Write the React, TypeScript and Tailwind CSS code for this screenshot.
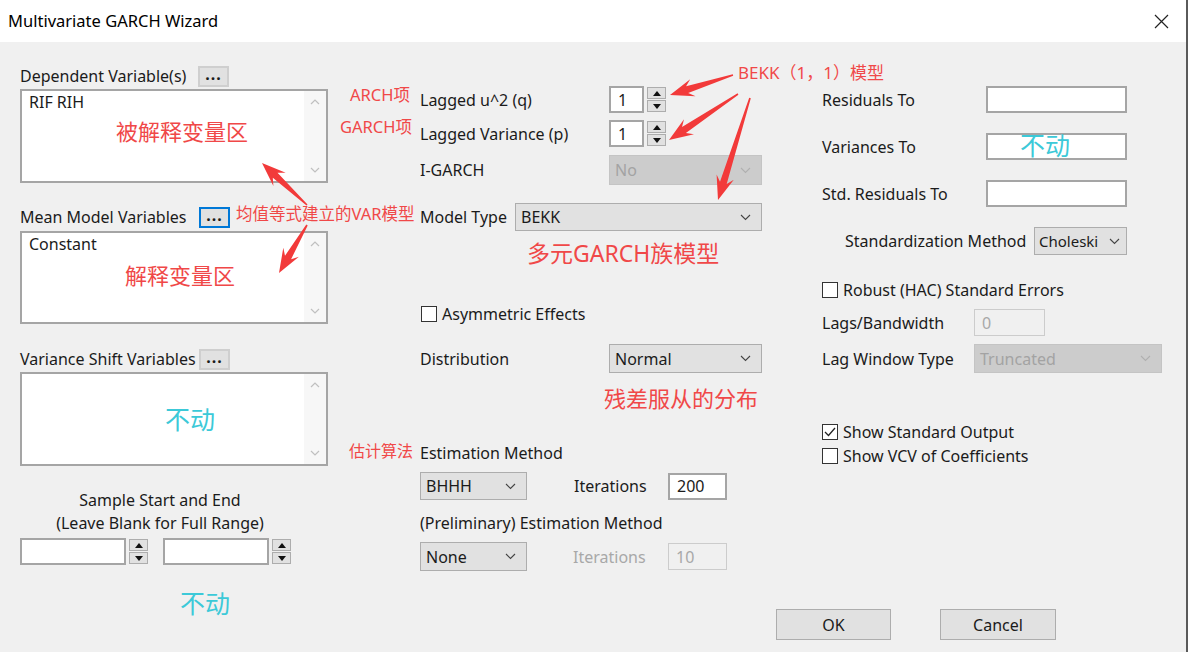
import React from "react";

const FONT = { fontFamily: '"Noto Sans", "Noto Sans CJK SC", sans-serif' };

function Chevron({ disabled }: { disabled?: boolean }) {
    return (
        <svg width="11" height="7" viewBox="0 0 11 7" className="shrink-0">
            <polyline
                points="1,1 5.5,5.5 10,1"
                fill="none"
                stroke={disabled ? "#b0b0b0" : "#444"}
                strokeWidth="1.1"
            />
        </svg>
    );
}

function Select({
    value,
    w,
    h,
    disabled,
    tight,
}: {
    value: string;
    w: string;
    h: string;
    disabled?: boolean;
    tight?: boolean;
}) {
    return (
        <div
            className={`${w} ${h} shrink-0 flex items-center justify-between border ${
                tight ? "pl-[4px] pr-[6px] text-[15px]" : "pl-[5px] pr-[10px]"
            } ${disabled ? "bg-[#cccccc] border-[#c4c4c4] text-[#a3a3a3]" : "bg-[#e1e1e1] border-[#adadad] text-[#1b1b1b]"}`}
        >
            <span>{value}</span>
            <Chevron disabled={disabled} />
        </div>
    );
}

function TextBox({ value, w, h, disabled }: { value?: string; w: string; h: string; disabled?: boolean }) {
    return (
        <div
            className={`${w} ${h} shrink-0 flex items-center pl-[7px] ${
                disabled
                    ? "bg-[#f0f0f0] border border-[#cccccc] text-[#a8a8a8]"
                    : "bg-white border-2 border-[#a5a5a5] text-[#1b1b1b]"
            }`}
        >
            {value}
        </div>
    );
}

function Tri({ up }: { up?: boolean }) {
    return (
        <svg width="8" height="5" viewBox="0 0 8 5">
            <polygon points={up ? "0,5 8,5 4,0" : "0,0 8,0 4,5"} fill="#111" />
        </svg>
    );
}

function SpinButtons() {
    return (
        <div className="flex flex-col gap-[1px] ml-[3px] shrink-0">
            <div className="w-[19px] h-[12px] bg-[#e1e1e1] border border-[#adadad] flex items-center justify-center">
                <Tri up />
            </div>
            <div className="w-[19px] h-[12px] bg-[#e1e1e1] border border-[#adadad] flex items-center justify-center">
                <Tri />
            </div>
        </div>
    );
}

function Spin({ value, w }: { value?: string; w: string }) {
    return (
        <div className="flex items-center shrink-0">
            <TextBox value={value} w={w} h="h-[27px]" />
            <SpinButtons />
        </div>
    );
}

function DotsButton({ focused }: { focused?: boolean }) {
    return (
        <div
            className={`w-[31px] h-[21px] flex items-end justify-center bg-[#e1e1e1] border-2 text-[16px] font-bold leading-none pb-[3px] tracking-[1px] ${
                focused ? "border-[#0078d7]" : "border-[#cfcfcf]"
            }`}
        >
            ...
        </div>
    );
}

function ListBox({ children, h }: { children?: React.ReactNode; h: string }) {
    return (
        <div className={`w-[308px] ${h} bg-white border-2 border-[#a5a5a5] flex`}>
            <div className="flex-1 pl-[7px] pt-[1px]">{children}</div>
            <div className="w-[22px] bg-[#f7f7f7] flex flex-col items-center justify-between py-[8px]">
                <svg width="10" height="6" viewBox="0 0 10 6">
                    <polyline points="1,5 5,1 9,5" fill="none" stroke="#c0c0c0" strokeWidth="1.2" />
                </svg>
                <svg width="10" height="6" viewBox="0 0 10 6">
                    <polyline points="1,1 5,5 9,1" fill="none" stroke="#c0c0c0" strokeWidth="1.2" />
                </svg>
            </div>
        </div>
    );
}

function Check({ label, checked, className }: { label: string; checked?: boolean; className?: string }) {
    return (
        <div className={`flex items-center h-[16px] ${className ?? ""}`}>
            <div className="w-[16px] h-[16px] border border-[#333] bg-white flex items-center justify-center shrink-0">
                {checked && (
                    <svg width="12" height="10" viewBox="0 0 12 10">
                        <polyline points="1,5 4.5,8.5 11,1" fill="none" stroke="#222" strokeWidth="1.3" />
                    </svg>
                )}
            </div>
            <span className="ml-[5px]">{label}</span>
        </div>
    );
}

function arrowPoints(x1: number, y1: number, x2: number, y2: number) {
    const dx = x2 - x1;
    const dy = y2 - y1;
    const L = Math.hypot(dx, dy);
    const ux = dx / L;
    const uy = dy / L;
    const nx = -uy;
    const ny = ux;
    const head = 24;
    const p = (t: number, w: number) => `${(x1 + ux * t + nx * w).toFixed(1)},${(y1 + uy * t + ny * w).toFixed(1)}`;
    return [
        p(0, 0.8),
        p(L - head + 6, 3.5),
        p(L - head, 9),
        p(L, 0),
        p(L - head, -9),
        p(L - head + 6, -3.5),
        p(0, -0.8),
    ].join(" ");
}

const ARROWS: [number, number, number, number][] = [
    [733, 75, 670, 95],
    [738, 94, 669, 140],
    [750, 98, 718, 200],
    [307, 205, 262, 163],
    [307, 225, 279, 273],
];

function Annotations() {
    return (
        <div className="absolute inset-0 pointer-events-none">
            <svg width="1188" height="652" className="absolute inset-0">
                {ARROWS.map((a, i) => (
                    <polygon key={i} points={arrowPoints(a[0], a[1], a[2], a[3])} fill="#f23a3a" />
                ))}
            </svg>
            <div className="absolute left-[350px] top-[85px] text-[16.5px] text-[#f04848]">ARCH项</div>
            <div className="absolute left-[340px] top-[117px] text-[16.5px] text-[#f04848]">GARCH项</div>
            <div className="absolute left-[738px] top-[63px] text-[17px] text-[#f04848]">BEKK（1，1）模型</div>
            <div className="absolute left-[116px] top-[121px] text-[22px] text-[#f04848]">被解释变量区</div>
            <div className="absolute left-[125px] top-[265px] text-[22px] text-[#f04848]">解释变量区</div>
            <div className="absolute left-[236px] top-[204px] text-[16.5px] text-[#f04848]">均值等式建立的VAR模型</div>
            <div className="absolute left-[527px] top-[243px] text-[23px] text-[#f04848]">多元GARCH族模型</div>
            <div className="absolute left-[604px] top-[388px] text-[22px] text-[#f04848]">残差服从的分布</div>
            <div className="absolute left-[349px] top-[441px] text-[16px] text-[#f04848]">估计算法</div>
            <div className="absolute left-[165px] top-[409px] text-[25px] text-[#3cc9d8]">不动</div>
            <div className="absolute left-[1020px] top-[135px] text-[25px] text-[#3cc9d8]">不动</div>
            <div className="absolute left-[180px] top-[593px] text-[25px] text-[#3cc9d8]">不动</div>
        </div>
    );
}

export default function App() {
    return (
        <div
            className="relative w-[1188px] h-[652px] overflow-hidden bg-[#f0f0f0] border-r-2 border-r-[#5a5a5a] text-[16px] text-[#1b1b1b] leading-[20px]"
            style={FONT}
        >
            <div className="h-[42px] bg-white flex items-center justify-between pl-[8px] pr-[17px]">
                <span className="text-[16.5px] text-black">Multivariate GARCH Wizard</span>
                <svg width="15" height="15" viewBox="0 0 15 15">
                    <path d="M1 1 L14 14 M14 1 L1 14" stroke="#222" strokeWidth="1.2" />
                </svg>
            </div>

            <div className="flex">
                {/* left column */}
                <div className="w-[308px] ml-[20px] flex flex-col">
                    <div className="mt-[24px] h-[20px] flex items-center">
                        <span className="w-[178px]">Dependent Variable(s)</span>
                        <DotsButton />
                    </div>
                    <div className="mt-[3px]">
                        <ListBox h="h-[94px]">RIF RIH</ListBox>
                    </div>
                    <div className="mt-[24px] h-[20px] flex items-center">
                        <span className="w-[179px]">Mean Model Variables</span>
                        <DotsButton focused />
                    </div>
                    <div className="mt-[4px]">
                        <ListBox h="h-[93px]">Constant</ListBox>
                    </div>
                    <div className="mt-[25px] h-[20px] flex items-center">
                        <span className="w-[179px]">Variance Shift Variables</span>
                        <DotsButton />
                    </div>
                    <div className="mt-[3px]">
                        <ListBox h="h-[94px]" />
                    </div>
                    <div className="mt-[23px] w-[280px] text-center leading-[23px]">
                        <div>Sample Start and End</div>
                        <div>(Leave Blank for Full Range)</div>
                    </div>
                    <div className="mt-[3px] flex items-center gap-[15px]">
                        <Spin w="w-[106px]" />
                        <Spin w="w-[106px]" />
                    </div>
                </div>

                {/* middle + right */}
                <div className="ml-[92px] flex flex-col">
                    <div className="flex">
                        <div className="w-[342px] flex flex-col">
                            <div className="mt-[44px] h-[27px] flex items-center">
                                <span className="w-[189px]">Lagged u^2 (q)</span>
                                <Spin value="1" w="w-[35px]" />
                            </div>
                            <div className="mt-[7px] h-[27px] flex items-center">
                                <span className="w-[189px]">Lagged Variance (p)</span>
                                <Spin value="1" w="w-[35px]" />
                            </div>
                            <div className="mt-[8px] h-[30px] flex items-center">
                                <span className="w-[189px]">I-GARCH</span>
                                <Select value="No" w="w-[153px]" h="h-[30px]" disabled />
                            </div>
                            <div className="mt-[18px] h-[28px] flex items-center">
                                <span className="w-[95px]">Model Type</span>
                                <Select value="BEKK" w="w-[247px]" h="h-[28px]" />
                            </div>
                            <Check className="mt-[75px] ml-[1px]" label="Asymmetric Effects" />
                            <div className="mt-[22px] h-[29px] flex items-center">
                                <span className="w-[189px]">Distribution</span>
                                <Select value="Normal" w="w-[153px]" h="h-[29px]" />
                            </div>
                            <div className="mt-[70px] h-[20px] flex items-center">Estimation Method</div>
                            <div className="mt-[9px] h-[28px] flex items-center">
                                <Select value="BHHH" w="w-[107px]" h="h-[28px]" />
                                <span className="ml-[47px] w-[94px]">Iterations</span>
                                <TextBox value="200" w="w-[59px]" h="h-[27px]" />
                            </div>
                            <div className="mt-[13px] h-[20px] flex items-center">(Preliminary) Estimation Method</div>
                            <div className="mt-[9px] h-[29px] flex items-center">
                                <Select value="None" w="w-[107px]" h="h-[29px]" />
                                <span className="ml-[46px] w-[95px] text-[#a8a8a8]">Iterations</span>
                                <TextBox value="10" w="w-[59px]" h="h-[27px]" disabled />
                            </div>
                        </div>

                        <div className="ml-[60px] w-[340px] flex flex-col">
                            <div className="mt-[44px] h-[27px] flex items-center">
                                <span className="w-[164px]">Residuals To</span>
                                <TextBox w="w-[141px]" h="h-[27px]" />
                            </div>
                            <div className="mt-[20px] h-[27px] flex items-center">
                                <span className="w-[164px]">Variances To</span>
                                <TextBox w="w-[141px]" h="h-[27px]" />
                            </div>
                            <div className="mt-[20px] h-[27px] flex items-center">
                                <span className="w-[164px]">Std. Residuals To</span>
                                <TextBox w="w-[141px]" h="h-[27px]" />
                            </div>
                            <div className="mt-[20px] h-[28px] flex items-center">
                                <span className="ml-[23px] w-[189px]">Standardization Method</span>
                                <Select value="Choleski" w="w-[93px]" h="h-[28px]" tight />
                            </div>
                            <Check className="mt-[27px]" label="Robust (HAC) Standard Errors" />
                            <div className="mt-[11px] h-[27px] flex items-center">
                                <span className="w-[152px]">Lags/Bandwidth</span>
                                <TextBox value="0" w="w-[71px]" h="h-[27px]" disabled />
                            </div>
                            <div className="mt-[8px] h-[29px] flex items-center">
                                <span className="w-[152px]">Lag Window Type</span>
                                <Select value="Truncated" w="w-[188px]" h="h-[29px]" disabled />
                            </div>
                            <Check className="mt-[51px]" label="Show Standard Output" checked />
                            <Check className="mt-[8px]" label="Show VCV of Coefficients" />
                        </div>
                    </div>

                    <div className="mt-[38px] ml-[356px] flex gap-[49px]">
                        <div className="w-[115px] h-[31px] bg-[#e1e1e1] border border-[#adadad] flex items-center justify-center">
                            OK
                        </div>
                        <div className="w-[116px] h-[31px] bg-[#e1e1e1] border border-[#adadad] flex items-center justify-center">
                            Cancel
                        </div>
                    </div>
                </div>
            </div>

            <Annotations />
        </div>
    );
}
